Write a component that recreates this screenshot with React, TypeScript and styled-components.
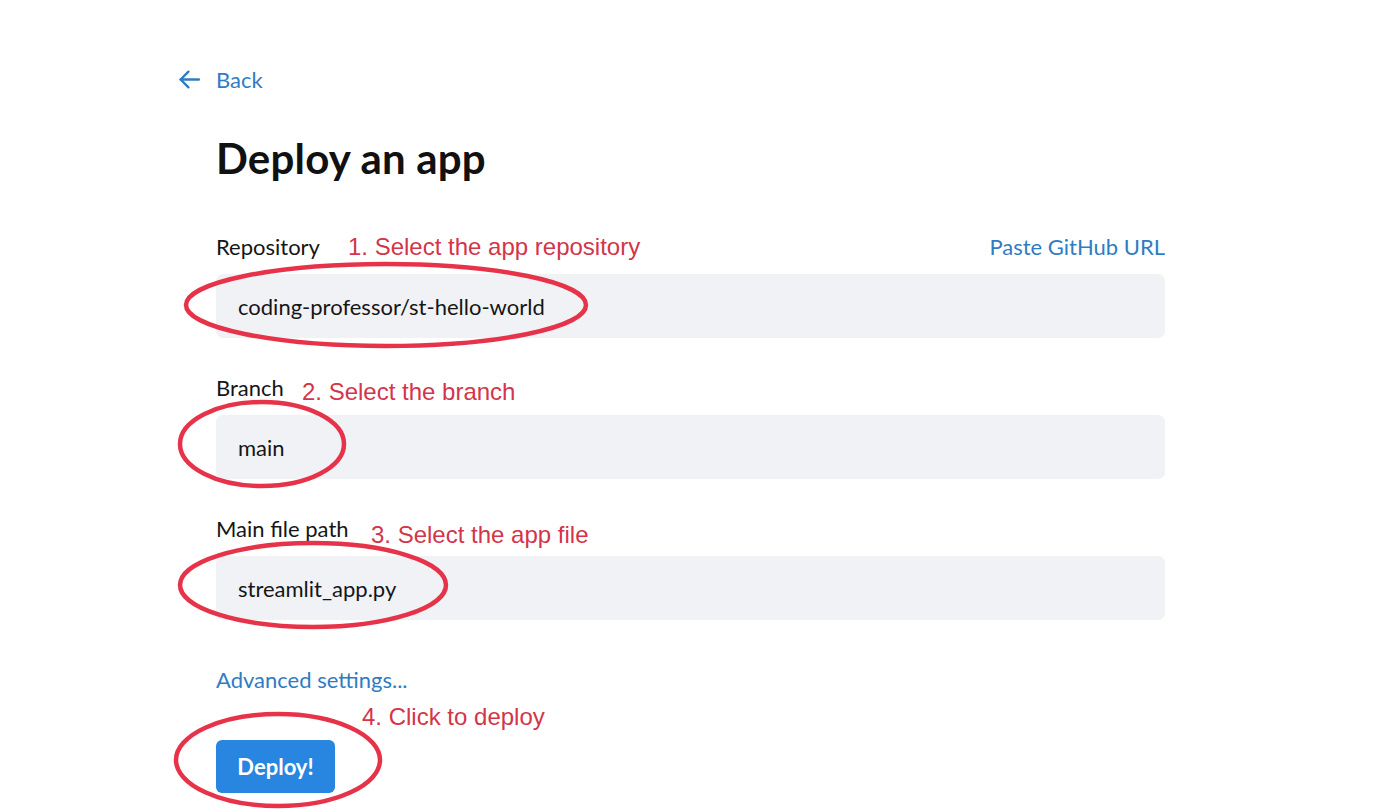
import React from "react";
import styled, { createGlobalStyle } from "styled-components";

const Global = createGlobalStyle`
  html, body { margin: 0; padding: 0; background: #ffffff; }
  body { font-family: "Lato", "Noto Sans", sans-serif; -webkit-font-smoothing: antialiased; }
  * { box-sizing: border-box; }
`;

const Page = styled.div`
  position: relative;
  width: 1380px;
  height: 812px;
  overflow: hidden;
  padding: 64px 0 0 177px;
`;

const BackLink = styled.a`
  display: flex;
  align-items: center;
  gap: 14px;
  height: 30px;
  color: #2f7cc2;
  font-size: 22px;
  text-decoration: none;
`;

const Main = styled.main`
  width: 949px;
  margin-left: 39px;
  display: flex;
  flex-direction: column;
`;

const Title = styled.h1`
  margin: 40px 0 0 0;
  font-size: 42px;
  line-height: 48px;
  font-weight: 700;
  color: #111111;
  letter-spacing: 0.2px;
`;

const Field = styled.div<{ $top: number }>`
  margin-top: ${(p) => p.$top}px;
  display: flex;
  flex-direction: column;
  gap: 14px;
`;

const LabelRow = styled.div`
  display: flex;
  justify-content: space-between;
  align-items: center;
  height: 28px;
`;

const Label = styled.label`
  font-size: 22px;
  color: #161616;
`;

const TextLink = styled.a`
  font-size: 22px;
  color: #2f7cc2;
  text-decoration: none;
`;

const InputBox = styled.div`
  height: 64px;
  background: #f0f2f6;
  border-radius: 7px;
  display: flex;
  align-items: center;
  padding-left: 22px;
  font-size: 22px;
  color: #161616;
`;

const Advanced = styled(TextLink)`
  margin-top: 46px;
  line-height: 28px;
`;

const DeployButton = styled.button`
  margin-top: 46px;
  align-self: flex-start;
  width: 119px;
  height: 53px;
  border: none;
  border-radius: 6px;
  background: #2885e0;
  color: #ffffff;
  font-family: inherit;
  font-size: 22px;
  font-weight: 700;
  cursor: pointer;
`;

const Overlay = styled.svg`
  position: absolute;
  left: 0;
  top: 0;
  pointer-events: none;
`;

const Note = styled.span<{ $x: number; $y: number }>`
  position: absolute;
  left: ${(p) => p.$x}px;
  top: ${(p) => p.$y}px;
  font-family: "Liberation Sans", Arial, sans-serif;
  font-size: 24px;
  line-height: 28px;
  color: #d3354a;
  white-space: nowrap;
`;

const notes = [
  { x: 348, y: 233, text: "1. Select the app repository" },
  { x: 302, y: 378, text: "2. Select the branch" },
  { x: 371, y: 521, text: "3. Select the app file" },
  { x: 362, y: 703, text: "4. Click to deploy" },
];

const rings = [
  { cx: 386, cy: 305, rx: 200, ry: 41 },
  { cx: 262, cy: 444, rx: 82, ry: 42 },
  { cx: 313, cy: 585, rx: 133, ry: 42 },
  { cx: 278, cy: 760, rx: 102, ry: 46 },
];

export default function App() {
  return (
    <>
      <Global />
      <Page>
        <BackLink href="#">
          <svg width="25" height="25" viewBox="0 0 24 24" fill="none" stroke="#2f7cc2" strokeWidth="2.3" strokeLinecap="round" strokeLinejoin="round">
            <path d="M21 12H3.5" />
            <path d="M11 4.5 3.5 12l7.5 7.5" />
          </svg>
          Back
        </BackLink>
        <Main>
          <Title>Deploy an app</Title>
          <Field $top={50}>
            <LabelRow>
              <Label>Repository</Label>
              <TextLink href="#">Paste GitHub URL</TextLink>
            </LabelRow>
            <InputBox>coding-professor/st-hello-world</InputBox>
          </Field>
          <Field $top={35}>
            <LabelRow>
              <Label>Branch</Label>
            </LabelRow>
            <InputBox>main</InputBox>
          </Field>
          <Field $top={35}>
            <LabelRow>
              <Label>Main file path</Label>
            </LabelRow>
            <InputBox>streamlit_app.py</InputBox>
          </Field>
          <Advanced href="#">Advanced settings...</Advanced>
          <DeployButton>Deploy!</DeployButton>
        </Main>
        <Overlay width="1380" height="812" viewBox="0 0 1380 812">
          {rings.map((r, i) => (
            <ellipse key={i} cx={r.cx} cy={r.cy} rx={r.rx} ry={r.ry} fill="none" stroke="#e6334a" strokeWidth="4.5" />
          ))}
        </Overlay>
        {notes.map((n, i) => (
          <Note key={i} $x={n.x} $y={n.y}>
            {n.text}
          </Note>
        ))}
      </Page>
    </>
  );
}
